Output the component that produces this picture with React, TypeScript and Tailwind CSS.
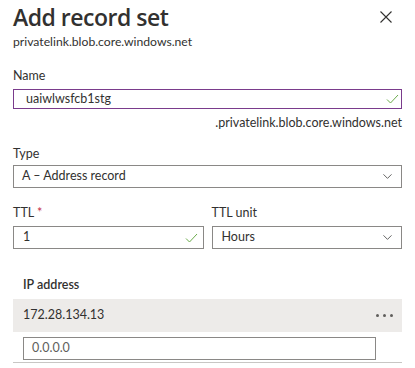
import { ChevronDown } from 'lucide-react'

function Check() {
  return (
    <svg width="13" height="10" viewBox="0 0 13 10" fill="none">
      <path d="M1 5.5 L4.5 9 L12 1" stroke="#6bab4b" strokeWidth="1" />
    </svg>
  )
}

function Label({ children }: { children: React.ReactNode }) {
  return <div className="text-[12.5px] leading-[16px] text-[#323130]">{children}</div>
}

export default function App() {
  return (
    <div
      className="w-[415px] h-[368px] bg-white text-[#323130] overflow-hidden px-[13px] text-[12.5px]"
      style={{ fontFamily: 'Lato, "Open Sans", sans-serif' }}
    >
      <div className="flex items-start justify-between">
        <h1
          className="text-[23px] leading-[34px] font-semibold tracking-[-0.5px]"
          style={{ fontFamily: '"Open Sans", sans-serif' }}
        >
          Add record set
        </h1>
        <svg width="12" height="12" viewBox="0 0 12 12" className="mt-[11px] mr-[10px]">
          <path d="M0.5 0.5 L11.5 11.5 M11.5 0.5 L0.5 11.5" stroke="#323130" strokeWidth="1.1" />
        </svg>
      </div>
      <div className="text-[12.2px] leading-[16px]">privatelink.blob.core.windows.net</div>

      <div className="mt-[18px]">
        <Label>Name</Label>
        <div className="mt-[5px] h-[20px] border border-[#7a3b8c] flex items-center justify-between pl-[12px] pr-[2px]">
          <span>uaiwlwsfcb1stg</span>
          <Check />
        </div>
        <div className="text-right leading-[16px] mt-[6px]">.privatelink.blob.core.windows.net</div>
      </div>

      <div className="mt-[15px]">
        <Label>Type</Label>
        <div className="mt-[3px] h-[23px] border border-[#8a8886] flex items-center justify-between pl-[8px] pr-[6px]">
          <span>A – Address record</span>
          <ChevronDown size={15} strokeWidth={1.2} />
        </div>
      </div>

      <div className="mt-[17px] grid grid-cols-2 gap-[8px]">
        <div>
          <Label>
            TTL <span className="text-[#c4314b]">*</span>
          </Label>
          <div className="mt-[5px] h-[23px] border border-[#8a8886] flex items-center justify-between pl-[9px] pr-[5px]">
            <span>1</span>
            <Check />
          </div>
        </div>
        <div>
          <Label>TTL unit</Label>
          <div className="mt-[5px] h-[23px] border border-[#8a8886] flex items-center justify-between pl-[9px] pr-[6px]">
            <span>Hours</span>
            <ChevronDown size={15} strokeWidth={1.2} />
          </div>
        </div>
      </div>

      <div className="mt-[28px] pl-[10px] leading-[16px] font-semibold">IP address</div>
      <div className="mt-[6px] h-[33px] bg-[#edebe9] flex items-center justify-between pl-[10px] pr-[9px]">
        <span>172.28.134.13</span>
        <span className="flex gap-[4px]">
          <span className="w-[3px] h-[3px] rounded-full bg-[#605e5c]" />
          <span className="w-[3px] h-[3px] rounded-full bg-[#605e5c]" />
          <span className="w-[3px] h-[3px] rounded-full bg-[#605e5c]" />
        </span>
      </div>
      <div className="border-b border-[#c8c6c4] pt-[5px] pb-[2px] pl-[10px]">
        <div className="w-[353px] h-[23px] border border-[#8a8886] flex items-center pl-[8px] text-[#605e5c]">
          0.0.0.0
        </div>
      </div>
    </div>
  )
}
